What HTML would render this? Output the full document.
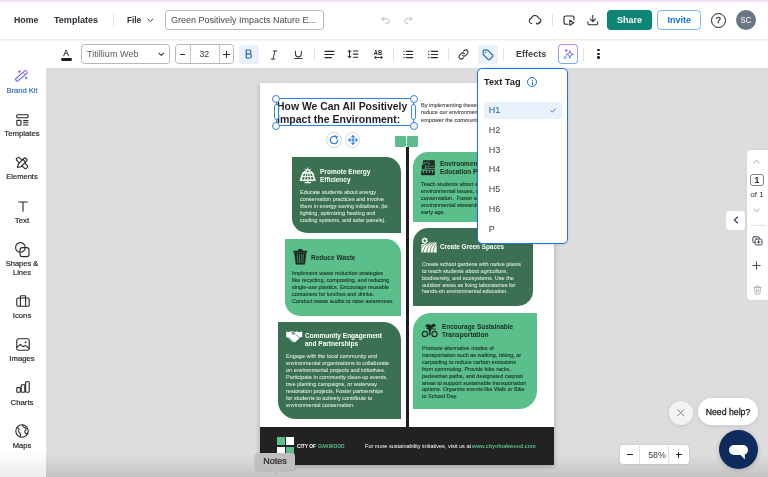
<!DOCTYPE html>
<html><head><meta charset="utf-8"><title>Editor</title>
<style>
html,body{margin:0;padding:0;}
body{width:768px;height:477px;overflow:hidden;position:relative;background:#dddddd;font-family:"Liberation Sans", sans-serif;}
.t{position:absolute;white-space:pre;font-family:"Liberation Sans", sans-serif;display:block;}
.a{position:absolute;}
#root{position:absolute;left:0;top:0;width:768px;height:477px;overflow:hidden;will-change:transform;}

.card{position:absolute;z-index:1;}
.sep{position:absolute;width:1px;background:#dcdfe3;z-index:3;}
svg{position:absolute;overflow:visible;}

</style></head><body>
<div id="root">
<div class="a" style="left:260.3px;top:83px;width:294.2px;height:381.6px;background:#fff;z-index:0;box-shadow:0 1.5px 5px rgba(0,0,0,.25);"></div>
<div class="a" style="left:260.3px;top:426.7px;width:294.2px;height:37.9px;background:#222222;z-index:1;"></div>
<div class="a" style="left:405.5px;top:147px;width:3.2px;height:279.7px;background:#1d1d1d;z-index:1;"></div>
<div class="a" style="left:395.2px;top:136.3px;width:10.4px;height:10.6px;background:#5bbf8b;z-index:1;border-radius:1px;"></div>
<div class="a" style="left:407.2px;top:136.3px;width:10.9px;height:10.6px;background:#5bbf8b;z-index:1;border-radius:1px;"></div>
<div class="a" style="left:292px;top:156.5px;width:109.2px;height:76.1px;background:#3b7152;z-index:1;border-radius:0 15px 0 15px;"></div>
<div class="a" style="left:285.3px;top:238.8px;width:115.9px;height:77.2px;background:#5bbf8b;z-index:1;border-radius:0 15px 0 15px;"></div>
<div class="a" style="left:277.8px;top:322.4px;width:123.4px;height:97px;background:#3b7152;z-index:1;border-radius:0 18px 0 18px;"></div>
<div class="a" style="left:413.1px;top:151.7px;width:124px;height:70px;background:#5bbf8b;z-index:1;border-radius:15px 0 15px 0;"></div>
<div class="a" style="left:413.1px;top:228px;width:120px;height:77.7px;background:#3b7152;z-index:1;border-radius:15px 0 15px 0;"></div>
<div class="a" style="left:413.1px;top:313px;width:124.1px;height:96.3px;background:#5bbf8b;z-index:1;border-radius:18px 0 18px 0;"></div>
<div class="a" style="left:277px;top:437px;width:7.5px;height:7.5px;background:#5bbf8b;z-index:2;"></div>
<div class="a" style="left:286px;top:437px;width:7.5px;height:7.5px;background:#fff;z-index:2;"></div>
<div class="a" style="left:277px;top:446.5px;width:7.5px;height:7.5px;background:#fff;z-index:2;"></div>
<div class="a" style="left:286px;top:446.5px;width:7.5px;height:7.5px;background:#5bbf8b;z-index:2;"></div>
<div class="a" style="left:0px;top:0px;width:768px;height:39px;background:#fff;z-index:5;box-shadow:0 1px 2px rgba(0,0,0,.11);"></div>
<div class="a" style="left:0px;top:0px;width:768px;height:1.5px;background:#f1e2f6;z-index:6;"></div>
<div class="a" style="left:46px;top:39px;width:722px;height:29px;background:#fff;z-index:4;"></div>
<div class="a" style="left:0px;top:39px;width:46px;height:438px;background:#fff;z-index:4;"></div>
<svg style="left:146.9px;top:17.9px;z-index:7;" width="6.6" height="5" viewBox="0 0 8 6" fill="none"><path d="M1 1.2 L4 4.2 L7 1.2" stroke="#2f3237" stroke-width="1.2" stroke-linecap="round" stroke-linejoin="round"/></svg>
<div class="a" style="left:113.2px;top:13.5px;width:1px;height:12.5px;background:#e6e8eb;z-index:7;"></div>
<div class="a" style="left:165.0px;top:10.2px;width:158.6px;height:19.6px;background:#fff;z-index:7;border:1px solid #b4b8bf;border-radius:3.5px;box-sizing:border-box;"></div>
<svg style="left:380.7px;top:16.2px;z-index:7;" width="9.7" height="7.95" viewBox="0 0 11 9" fill="none"><path d="M3.2 1 L1 3.2 L3.2 5.4 M1 3.2 H6.8 A2.6 2.6 0 0 1 6.8 8.4 H5.6" stroke="#b4b8bf" stroke-width="1.1" stroke-linecap="round" stroke-linejoin="round"/></svg>
<svg style="left:403.5px;top:16.2px;z-index:7;" width="9.7" height="7.95" viewBox="0 0 11 9" fill="none"><path d="M6.8 1 L9 3.2 L6.8 5.4 M9 3.2 H3.2 A2.6 2.6 0 0 0 3.2 8.4 H4.4" stroke="#b4b8bf" stroke-width="1" stroke-linecap="round" stroke-linejoin="round"/></svg>
<svg style="left:527.7px;top:14.2px;z-index:7;" width="14.6" height="12.4" viewBox="0 0 16 13" fill="none"><path d="M4.2 10.2 H3.9 A2.9 2.9 0 0 1 3.6 4.5 A4 4 0 0 1 11.3 4 A3.1 3.1 0 0 1 12.6 9.8" stroke="#2a2d33" stroke-width="1.15" stroke-linecap="round"/><path d="M9 9.6 L10.4 11 L12.8 8.4" stroke="#2a2d33" stroke-width="1.1" stroke-linecap="round" stroke-linejoin="round"/></svg>
<div class="a" style="left:552.3px;top:14px;width:1px;height:12px;background:#dfe1e5;z-index:7;"></div>
<svg style="left:562.5px;top:15px;z-index:7;" width="12" height="11" viewBox="0 0 12 11" fill="none"><path d="M5 9.2 H2.6 A1.6 1.6 0 0 1 1 7.6 V2.6 A1.6 1.6 0 0 1 2.6 1 H9.4 A1.6 1.6 0 0 1 11 2.6 V4.6" stroke="#2a2d33" stroke-width="1.15" stroke-linecap="round"/><path d="M6.8 5.2 L10.8 7.7 L6.8 10.2 Z" stroke="#2a2d33" stroke-width="1.05" stroke-linejoin="round"/></svg>
<svg style="left:586.6px;top:14.2px;z-index:7;" width="11.6" height="12.2" viewBox="0 0 13 13" fill="none"><path d="M6.5 1 V8 M3.4 5.2 L6.5 8.2 L9.6 5.2" stroke="#2a2d33" stroke-width="1.15" stroke-linecap="round" stroke-linejoin="round"/><path d="M1 8.4 V10.4 A1.4 1.4 0 0 0 2.4 11.8 H10.6 A1.4 1.4 0 0 0 12 10.4 V8.4" stroke="#2a2d33" stroke-width="1.15" stroke-linecap="round"/></svg>
<div class="a" style="left:607.2px;top:10.3px;width:44.8px;height:19.8px;background:#0e8575;z-index:7;border-radius:3.8px;"></div>
<div class="a" style="left:656.9px;top:10px;width:44.6px;height:20.4px;background:#fff;z-index:7;border:1.4px solid #80b3f4;border-radius:4.2px;box-sizing:border-box;"></div>
<div class="a" style="left:711px;top:12.7px;width:15px;height:15px;background:#fff;z-index:7;border:1.3px solid #1d1f23;border-radius:50%;box-sizing:border-box;"></div>
<div class="a" style="left:736px;top:10.2px;width:19.8px;height:19.8px;background:#6b7685;z-index:7;border-radius:50%;"></div>
<div class="a" style="left:60.5px;top:58px;width:11.4px;height:2.8px;background:#1d1f23;z-index:7;border-radius:1.4px;"></div>
<div class="a" style="left:81.2px;top:44.4px;width:88.4px;height:19.5px;background:#fff;z-index:7;border:1px solid #b3b7be;border-radius:3.5px;box-sizing:border-box;"></div>
<svg style="left:158px;top:52.2px;z-index:7;" width="6.6" height="5" viewBox="0 0 8 6" fill="none"><path d="M1 1.2 L4 4.2 L7 1.2" stroke="#34373d" stroke-width="1.25" stroke-linecap="round" stroke-linejoin="round"/></svg>
<div class="a" style="left:175.2px;top:44.4px;width:58.8px;height:19.5px;background:#fff;z-index:7;border:1px solid #b3b7be;border-radius:3.5px;box-sizing:border-box;"></div>
<div class="a" style="left:190px;top:45px;width:1px;height:18.4px;background:#c8ccd2;z-index:8;"></div>
<div class="a" style="left:218.8px;top:45px;width:1px;height:18.4px;background:#c8ccd2;z-index:8;"></div>
<div class="a" style="left:179.8px;top:54px;width:5.6px;height:1.1px;background:#2a2d33;z-index:8;"></div>
<div class="a" style="left:223px;top:54px;width:6.6px;height:1.1px;background:#2a2d33;z-index:8;"></div>
<div class="a" style="left:225.75px;top:51.2px;width:1.1px;height:6.7px;background:#2a2d33;z-index:8;"></div>
<div class="a" style="left:239.3px;top:44.6px;width:19.4px;height:19.2px;background:#e8f1fc;z-index:7;border-radius:3.5px;"></div>
<svg style="left:245px;top:49.3px;z-index:7;" width="8" height="10" viewBox="0 0 8 10" fill="none"><path d="M1.3 1 H4.3 A2 2 0 0 1 4.3 4.9 H1.3 Z M1.3 4.9 H4.8 A2.1 2.1 0 0 1 4.8 9 H1.3 Z" stroke="#2467b8" stroke-width="1.2" stroke-linejoin="round"/></svg>
<svg style="left:269.5px;top:49.5px;z-index:7;" width="8" height="10" viewBox="0 0 8 10" fill="none"><path d="M3.2 1 H6.8 M1.2 9 H4.8 M5 1 L3 9" stroke="#3a3d42" stroke-width="1" stroke-linecap="round"/></svg>
<svg style="left:293.8px;top:49.8px;z-index:7;" width="9" height="10" viewBox="0 0 9 10" fill="none"><path d="M1.5 1 V4 A2.9 2.9 0 0 0 7.3 4 V1" stroke="#3a3d42" stroke-width="1.05" stroke-linecap="round"/><path d="M0.8 8.5 H8.2" stroke="#3a3d42" stroke-width="1" stroke-linecap="round"/></svg>
<div class="a" style="left:313.5px;top:48px;width:1px;height:13px;background:#e1e3e7;z-index:7;"></div>
<svg style="left:323.5px;top:50px;z-index:7;" width="11" height="9" viewBox="0 0 11 9" fill="none"><path d="M0.9 1.3 H9.9 M0.9 4.45 H9.9 M0.9 7.6 H7.4" stroke="#25282d" stroke-width="1.15" stroke-linecap="round"/></svg>
<svg style="left:347.3px;top:49.3px;z-index:7;" width="12" height="10" viewBox="0 0 12 10" fill="none"><path d="M2.5 1.2 V8.8 M0.9 2.8 L2.5 1.1 L4.1 2.8 M0.9 7.2 L2.5 8.9 L4.1 7.2" stroke="#25282d" stroke-width="1" stroke-linecap="round" stroke-linejoin="round"/><path d="M6.4 2 H10.8 M6.4 5.1 H10.8 M6.4 8.2 H10.8" stroke="#25282d" stroke-width="1.15" stroke-linecap="round"/></svg>
<svg style="left:373.6px;top:54.8px;z-index:7;" width="9" height="5" viewBox="0 0 9 5" fill="none"><path d="M0.8 2.5 H8.2 M2.1 1.1 L0.7 2.5 L2.1 3.9 M6.9 1.1 L8.3 2.5 L6.9 3.9" stroke="#25282d" stroke-width="0.9" stroke-linecap="round" stroke-linejoin="round"/></svg>
<div class="a" style="left:393px;top:48px;width:1px;height:13px;background:#e1e3e7;z-index:7;"></div>
<svg style="left:403.2px;top:50px;z-index:7;" width="10" height="9" viewBox="0 0 10 9" fill="none"><path d="M3.2 1.3 H9.6 M3.2 4.45 H9.6 M3.2 7.6 H9.6" stroke="#25282d" stroke-width="1.15" stroke-linecap="round"/><path d="M0.9 1.3 H1 M0.9 4.45 H1 M0.9 7.6 H1" stroke="#25282d" stroke-width="1.25" stroke-linecap="round"/></svg>
<svg style="left:428.2px;top:50px;z-index:7;" width="10" height="9" viewBox="0 0 10 9" fill="none"><path d="M3.2 1.3 H9.6 M3.2 4.45 H9.6 M3.2 7.6 H9.6" stroke="#25282d" stroke-width="1.15" stroke-linecap="round"/><path d="M0.8 0.6 V2 M0.5 4.1 H1.1 V4.8 H0.5 M0.5 7.2 H1.1 V8 H0.5" stroke="#25282d" stroke-width="0.7" stroke-linecap="round"/></svg>
<div class="a" style="left:448.1px;top:48px;width:1px;height:13px;background:#e1e3e7;z-index:7;"></div>
<svg style="left:457.5px;top:49px;z-index:7;" width="11" height="11" viewBox="0 0 11 11" fill="none"><path d="M4.6 6.4 A2.2 2.2 0 0 0 7.7 6.4 L9.5 4.6 A2.2 2.2 0 0 0 6.4 1.5 L5.6 2.3" stroke="#2a2d33" stroke-width="1.05" stroke-linecap="round"/><path d="M6.4 4.6 A2.2 2.2 0 0 0 3.3 4.6 L1.5 6.4 A2.2 2.2 0 0 0 4.6 9.5 L5.4 8.7" stroke="#2a2d33" stroke-width="1.05" stroke-linecap="round"/></svg>
<div class="a" style="left:478.2px;top:44.6px;width:19.4px;height:19.2px;background:#e8f1fc;z-index:7;border-radius:3.5px;"></div>
<svg style="left:482.3px;top:48.6px;z-index:7;" width="12" height="12" viewBox="0 0 12 12" fill="none"><path d="M1.2 1.9 A0.8 0.8 0 0 1 2 1.1 H5.6 L10.7 6.2 A0.9 0.9 0 0 1 10.7 7.5 L7.6 10.6 A0.9 0.9 0 0 1 6.3 10.6 L1.2 5.5 Z" stroke="#2467b8" stroke-width="1.15" stroke-linejoin="round"/><circle cx="3.7" cy="3.6" r="0.75" fill="#2467b8"/></svg>
<div class="a" style="left:503px;top:48px;width:1px;height:13px;background:#e1e3e7;z-index:7;"></div>
<div class="a" style="left:558.2px;top:44.2px;width:19.8px;height:19.8px;background:linear-gradient(180deg,#b48cf5,#7aa8fb);z-index:7;border-radius:4px;"></div>
<div class="a" style="left:559.4px;top:45.4px;width:17.4px;height:17.4px;background:#fff;z-index:7;border-radius:3px;"></div>
<svg style="left:562px;top:48px;z-index:7;" width="12" height="12" viewBox="0 0 12 12" fill="none"><path d="M7.8 2.6 L8.75 5.45 L11.6 6.4 L8.75 7.35 L7.8 10.2 L6.85 7.35 L4 6.4 L6.85 5.45 Z" stroke="#5d63e6" stroke-width="0.85" stroke-linejoin="round"/><path d="M4.2 0.9 L4.65 2.15 L5.9 2.6 L4.65 3.05 L4.2 4.3 L3.75 3.05 L2.5 2.6 L3.75 2.15 Z" fill="#8a5cf0" stroke="#8a5cf0" stroke-width="0.3" stroke-linejoin="round"/><path d="M3.2 7.8 L3.65 9.05 L4.9 9.5 L3.65 9.95 L3.2 11.2 L2.75 9.95 L1.5 9.5 L2.75 9.05 Z" stroke="#5d7df0" stroke-width="0.6" stroke-linejoin="round"/></svg>
<div class="a" style="left:583px;top:48px;width:1px;height:13px;background:#e1e3e7;z-index:7;"></div>
<div class="a" style="left:597.2px;top:49.0px;width:2.4px;height:2.4px;background:#1d1f23;z-index:7;border-radius:50%;"></div>
<div class="a" style="left:597.2px;top:52.65px;width:2.4px;height:2.4px;background:#1d1f23;z-index:7;border-radius:50%;"></div>
<div class="a" style="left:597.2px;top:56.3px;width:2.4px;height:2.4px;background:#1d1f23;z-index:7;border-radius:50%;"></div>
<svg style="left:14px;top:68px;z-index:7;" width="16" height="16" viewBox="0 0 16 16" fill="none"><defs><linearGradient id="wg" x1="0" y1="1" x2="1" y2="0"><stop offset="0" stop-color="#3f6df0"/><stop offset="1" stop-color="#9a4df5"/></linearGradient></defs><g transform="translate(7.4,7.9) rotate(-41)"><rect x="-6.9" y="-1.6" width="13.8" height="3.2" rx="1.1" stroke="url(#wg)" stroke-width="1.05"/><path d="M3.6 -1.6 V1.6" stroke="#9a4df5" stroke-width="0.9"/></g><path d="M5.5 2.6 V4.6 M4.5 3.6 H6.5" stroke="#9a4df5" stroke-width="0.9" stroke-linecap="round"/><path d="M12.2 8.8 V10.8 M11.2 9.8 H13.2" stroke="#3f6df0" stroke-width="0.9" stroke-linecap="round"/></svg>
<svg style="left:16.2px;top:114.2px;z-index:7;" width="13" height="12" viewBox="0 0 13 12" fill="none"><rect x="0.8" y="0.8" width="11.2" height="3" rx="0.8" stroke="#25282d" stroke-width="1.1" stroke-linecap="round" stroke-linejoin="round"/><rect x="0.8" y="6.4" width="4.2" height="4.8" rx="0.8" stroke="#25282d" stroke-width="1.1" stroke-linecap="round" stroke-linejoin="round"/><path d="M7.6 6.6 H12 M7.6 8.8 H12 M7.6 11 H12" stroke="#25282d" stroke-width="1.1" stroke-linecap="round" stroke-linejoin="round"/></svg>
<svg style="left:15px;top:155.5px;z-index:7;" width="14" height="14" viewBox="0 0 14 14" fill="none"><g transform="rotate(-45 7 7)"><rect x="5.1" y="0.2" width="3.8" height="13.6" rx="1.2" fill="#fff" stroke="#25282d" stroke-width="1.1" stroke-linecap="round" stroke-linejoin="round"/></g><g transform="rotate(45 7 7)"><path d="M5.1 2.2 A1.2 1.2 0 0 1 6.3 1 H7.7 A1.2 1.2 0 0 1 8.9 2.2 V10.4 L7 13.4 L5.1 10.4 Z" fill="#fff" stroke="#25282d" stroke-width="1.1" stroke-linecap="round" stroke-linejoin="round"/><path d="M5.1 3.8 H8.9" stroke="#25282d" stroke-width="1.1" stroke-linecap="round" stroke-linejoin="round"/></g></svg>
<svg style="left:17.5px;top:200.5px;z-index:7;" width="10" height="11" viewBox="0 0 10 11" fill="none"><path d="M0.8 1 H9.2 M5 1 V10.2" stroke="#25282d" stroke-width="1.1" stroke-linecap="round" stroke-linejoin="round"/></svg>
<svg style="left:14.6px;top:242px;z-index:7;" width="15" height="15" viewBox="0 0 15 15" fill="none"><circle cx="5.4" cy="5.4" r="4.8" stroke="#25282d" stroke-width="1.1" stroke-linecap="round" stroke-linejoin="round"/><rect x="5" y="5.6" width="9" height="9" rx="2.2" stroke="#25282d" stroke-width="1.1" stroke-linecap="round" stroke-linejoin="round"/></svg>
<svg style="left:15.5px;top:294.5px;z-index:7;" width="14" height="12" viewBox="0 0 14 12" fill="none"><rect x="0.8" y="3" width="12.4" height="8.2" rx="1.2" stroke="#25282d" stroke-width="1.1" stroke-linecap="round" stroke-linejoin="round"/><path d="M4.4 3 V1.6 A0.8 0.8 0 0 1 5.2 0.8 H8.8 A0.8 0.8 0 0 1 9.6 1.6 V3 M4.4 3 V11 M9.6 3 V11" stroke="#25282d" stroke-width="1.1" stroke-linecap="round" stroke-linejoin="round"/></svg>
<svg style="left:15.5px;top:337.5px;z-index:7;" width="14" height="13" viewBox="0 0 14 13" fill="none"><rect x="0.8" y="0.8" width="12.4" height="11.4" rx="1.8" stroke="#25282d" stroke-width="1.1" stroke-linecap="round" stroke-linejoin="round"/><path d="M0.9 9.4 L4.4 6.4 L7.2 8.8 L9.2 7.4 L13 10.2" stroke="#25282d" stroke-width="1.1" stroke-linecap="round" stroke-linejoin="round"/><circle cx="9.6" cy="4.2" r="0.9" fill="#25282d"/></svg>
<svg style="left:15.5px;top:381px;z-index:7;" width="14" height="12" viewBox="0 0 14 12" fill="none"><rect x="0.8" y="6.6" width="3.6" height="4.6" rx="0.6" stroke="#25282d" stroke-width="1.1" stroke-linecap="round" stroke-linejoin="round"/><rect x="5.2" y="3.8" width="3.6" height="7.4" rx="0.6" stroke="#25282d" stroke-width="1.1" stroke-linecap="round" stroke-linejoin="round"/><rect x="9.6" y="0.8" width="3.6" height="10.4" rx="0.6" stroke="#25282d" stroke-width="1.1" stroke-linecap="round" stroke-linejoin="round"/></svg>
<svg style="left:15.3px;top:424px;z-index:7;" width="14" height="14" viewBox="0 0 14 14" fill="none"><circle cx="7" cy="7" r="6.2" stroke="#25282d" stroke-width="1.1" stroke-linecap="round" stroke-linejoin="round"/><path d="M2.2 3.4 C4 4.2 4.6 5.6 3.6 7 C3 8 4.8 8.6 5.4 10 C5.8 11 5.4 12.2 5.2 12.8 M8 1 C7.4 2.6 8.6 3.4 9.8 3.6 C11.2 3.8 11.6 5.2 10.6 6.2 C9.6 7.2 9.4 8.4 10.6 9.2 C11.4 9.8 12.2 9.6 12.8 9.2" stroke="#25282d" stroke-width="1.1" stroke-linecap="round" stroke-linejoin="round"/></svg>
<div class="a" style="left:477px;top:68px;width:91px;height:176.3px;background:#fff;z-index:9;border:1.7px solid #1a73e8;border-radius:5px;box-sizing:border-box;box-shadow:0 1px 3px rgba(0,0,0,.10);"></div>
<div class="a" style="left:527.3px;top:77.3px;width:10.2px;height:10.2px;background:#fff;z-index:10;border:1px solid #1a73e8;border-radius:50%;box-sizing:border-box;"></div>
<div class="a" style="left:531.9px;top:81.7px;width:1px;height:3.2px;background:#1a73e8;z-index:11;"></div>
<div class="a" style="left:531.9px;top:79.7px;width:1px;height:1.1px;background:#1a73e8;z-index:11;"></div>
<div class="a" style="left:484px;top:102.2px;width:77.7px;height:16.6px;background:#e9f1fd;z-index:10;border-radius:3px;"></div>
<svg style="left:550.2px;top:108.2px;z-index:11;" width="6.1" height="5.2" viewBox="0 0 7 6" fill="none"><path d="M0.8 3 L2.6 4.8 L6.2 0.9" stroke="#2a6bc0" stroke-width="1" stroke-linecap="round" stroke-linejoin="round"/></svg>
<div class="a" style="left:276.2px;top:98px;width:137.6px;height:27.5px;background:transparent;z-index:3;border:1px solid #2f80ed;box-sizing:border-box;"></div>
<div class="a" style="left:272.34999999999997px;top:94.5px;width:8.1px;height:8.1px;background:#fff;z-index:3;border:1.1px solid #2f80ed;border-radius:50%;box-sizing:border-box;"></div>
<div class="a" style="left:409.75px;top:94.5px;width:8.1px;height:8.1px;background:#fff;z-index:3;border:1.1px solid #2f80ed;border-radius:50%;box-sizing:border-box;"></div>
<div class="a" style="left:272.34999999999997px;top:121.5px;width:8.1px;height:8.1px;background:#fff;z-index:3;border:1.1px solid #2f80ed;border-radius:50%;box-sizing:border-box;"></div>
<div class="a" style="left:409.75px;top:121.5px;width:8.1px;height:8.1px;background:#fff;z-index:3;border:1.1px solid #2f80ed;border-radius:50%;box-sizing:border-box;"></div>
<div class="a" style="left:273.9px;top:103.6px;width:5.2px;height:16px;background:#fff;z-index:3;border:1px solid #2f80ed;border-radius:2.6px;box-sizing:border-box;"></div>
<div class="a" style="left:411.2px;top:103.6px;width:5.2px;height:16px;background:#fff;z-index:3;border:1px solid #2f80ed;border-radius:2.6px;box-sizing:border-box;"></div>
<div class="a" style="left:326.0px;top:132.0px;width:15.6px;height:15.6px;background:#fff;z-index:3;border:0.9px solid #d3d7dd;border-radius:50%;box-sizing:border-box;"></div>
<div class="a" style="left:344.7px;top:132.0px;width:15.6px;height:15.6px;background:#fff;z-index:3;border:0.9px solid #d3d7dd;border-radius:50%;box-sizing:border-box;"></div>
<svg style="left:328.8px;top:134.8px;z-index:4;" width="10" height="10" viewBox="0 0 10 10" fill="none"><path d="M8.7 5 A3.7 3.7 0 1 1 7.3 2.1" stroke="#2f80ed" stroke-width="1.25" stroke-linecap="round"/><path d="M5.9 0.9 L8.3 1.5 L7.5 3.9" stroke="#2f80ed" stroke-width="1.1" stroke-linecap="round" stroke-linejoin="round"/></svg>
<svg style="left:347.5px;top:134.8px;z-index:4;" width="10" height="10" viewBox="0 0 10 10" fill="none"><path d="M5 0.8 V9.2 M0.8 5 H9.2" stroke="#2f80ed" stroke-width="1.15" stroke-linecap="round"/><path d="M3.7 2.1 L5 0.7 L6.3 2.1 M3.7 7.9 L5 9.3 L6.3 7.9 M2.1 3.7 L0.7 5 L2.1 6.3 M7.9 3.7 L9.3 5 L7.9 6.3" stroke="#2f80ed" stroke-width="1.05" stroke-linecap="round" stroke-linejoin="round"/></svg>
<div class="a" style="left:746.5px;top:149.8px;width:22px;height:150.6px;background:#fff;z-index:5;border-radius:4px 0 0 4px;box-shadow:0 0 2px rgba(0,0,0,.12);"></div>
<svg style="left:753.3px;top:159.2px;z-index:7;" width="7" height="5" viewBox="0 0 7 5" fill="none"><path d="M0.8 4 L3.5 1.2 L6.2 4" stroke="#9aa0a8" stroke-width="1" stroke-linecap="round" stroke-linejoin="round"/></svg>
<div class="a" style="left:750px;top:173.5px;width:13.7px;height:12.9px;background:#fff;z-index:7;border:1px solid #7a7f87;border-radius:3px;box-sizing:border-box;"></div>
<svg style="left:753.3px;top:208.2px;z-index:7;" width="7" height="5" viewBox="0 0 7 5" fill="none"><path d="M0.8 1 L3.5 3.8 L6.2 1" stroke="#9aa0a8" stroke-width="1" stroke-linecap="round" stroke-linejoin="round"/></svg>
<div class="a" style="left:749.5px;top:224.8px;width:16px;height:1px;background:#e1e3e7;z-index:7;"></div>
<svg style="left:751.7px;top:236px;z-index:7;" width="11" height="10" viewBox="0 0 11 10" fill="none"><rect x="0.8" y="0.8" width="6.6" height="5.8" rx="1.3" stroke="#2c3446" stroke-width="0.9" stroke-linecap="round" stroke-linejoin="round"/><rect x="3.2" y="3" width="6.8" height="6" rx="1.3" fill="#fff" stroke="#2c3446" stroke-width="0.9" stroke-linecap="round" stroke-linejoin="round"/><path d="M6.6 4.6 V7.4 M5.2 6 H8" stroke="#2c3446" stroke-width="0.9" stroke-linecap="round" stroke-linejoin="round" stroke-width="0.8"/></svg>
<svg style="left:752.2px;top:260.6px;z-index:7;" width="9" height="9" viewBox="0 0 9 9" fill="none"><path d="M4.5 0.8 V8.2 M0.8 4.5 H8.2" stroke="#2c3446" stroke-width="0.9" stroke-linecap="round" stroke-linejoin="round"/></svg>
<svg style="left:753px;top:285px;z-index:7;" width="9" height="10" viewBox="0 0 9 10" fill="none"><path d="M0.8 2.4 H8.2 M3.2 2.2 V1 H5.8 V2.2 M1.6 2.6 L2 8.6 A0.7 0.7 0 0 0 2.7 9.2 H6.3 A0.7 0.7 0 0 0 7 8.6 L7.4 2.6 M3.6 4.2 V7.4 M5.4 4.2 V7.4" stroke="#aab0b8" stroke-width="0.9" stroke-linecap="round" stroke-linejoin="round"/></svg>
<div class="a" style="left:726px;top:211px;width:19px;height:18.6px;background:#fff;z-index:5;border-radius:4px;"></div>
<svg style="left:732.6px;top:216.3px;z-index:7;" width="6" height="8" viewBox="0 0 6 8" fill="none"><path d="M4.6 1 L1.4 4 L4.6 7" stroke="#2a3f6a" stroke-width="1.1" stroke-linecap="round" stroke-linejoin="round"/></svg>
<div class="a" style="left:619.8px;top:445.2px;width:68.8px;height:18.9px;background:#fff;z-index:5;border-radius:3px;box-shadow:0 0 2px rgba(0,0,0,.2);"></div>
<div class="a" style="left:638.8px;top:445.6px;width:1px;height:18.1px;background:#dfe1e5;z-index:6;"></div>
<div class="a" style="left:668.2px;top:445.6px;width:1px;height:18.1px;background:#dfe1e5;z-index:6;"></div>
<div class="a" style="left:627.2px;top:454.2px;width:5.4px;height:1.1px;background:#25282d;z-index:6;"></div>
<div class="a" style="left:675.6px;top:454.2px;width:6.4px;height:1.1px;background:#25282d;z-index:6;"></div>
<div class="a" style="left:678.25px;top:451.5px;width:1.1px;height:6.5px;background:#25282d;z-index:6;"></div>
<div class="a" style="left:668.8px;top:400.6px;width:24.2px;height:24.2px;background:#f3f3f3;z-index:5;border-radius:50%;box-shadow:0 1px 4px rgba(0,0,0,.10);"></div>
<svg style="left:677.2px;top:409px;z-index:7;" width="7.4" height="7.4" viewBox="0 0 7.4 7.4" fill="none"><path d="M0.7 0.7 L6.7 6.7 M6.7 0.7 L0.7 6.7" stroke="#6b6f76" stroke-width="0.8" stroke-linecap="round"/></svg>
<div class="a" style="left:698.1px;top:397.9px;width:60.1px;height:27.2px;background:#fff;z-index:5;border-radius:13.7px;box-shadow:0 1px 5px rgba(0,0,0,.10);"></div>
<div class="a" style="left:718.7px;top:429.8px;width:39.6px;height:39.6px;background:#0f2a5c;z-index:5;border-radius:50%;box-shadow:0 1px 5px rgba(0,0,0,.2);"></div>
<div class="a" style="left:728.5px;top:444.5px;width:19.4px;height:10.3px;background:#fff;z-index:6;border-radius:5.15px;"></div>
<svg style="left:740px;top:454px;z-index:6;" width="6" height="6" viewBox="0 0 6 6" fill="none"><path d="M0.2 0.4 H4.8 V5.6 Z" fill="#fff"/></svg>
<div class="a" style="left:46px;top:455px;width:722px;height:22px;background:linear-gradient(180deg,rgba(0,0,0,0),rgba(0,0,0,.115));z-index:4;"></div>
<div class="a" style="left:0px;top:450px;width:46px;height:27px;background:linear-gradient(180deg,rgba(0,0,0,0),rgba(0,0,0,.075));z-index:5;"></div>
<div class="a" style="left:254.6px;top:453.3px;width:40.2px;height:16.4px;background:#bfbfbf;z-index:5;border-radius:3px;box-shadow:0 1px 3px rgba(0,0,0,.15);"></div>
<svg style="left:270.6px;top:469.5px;z-index:5;" width="9.6" height="6" viewBox="0 0 9.6 6" fill="none"><path d="M0 0 H9.6 L4.8 5.8 Z" fill="#bfbfbf"/></svg>
<svg style="left:299px;top:166.5px;z-index:2;" width="18" height="17" viewBox="0 0 18 17" fill="none"><circle cx="8.8" cy="4.4" r="2.5" fill="#ffffff"/><circle cx="8.8" cy="4.6" r="1.1" fill="#3b7152"/><path d="M8.8 0.9 V1.6 M5.9 2 L6.5 2.6 M11.7 2 L11.1 2.6 M5.2 4.4 H5.8 M11.8 4.4 H12.4" stroke="#ffffff" stroke-width="1" stroke-linecap="round"/><path d="M3.8 5.6 H13.8 L16.3 13.6 H1 Z" fill="#ffffff" stroke="#ffffff" stroke-width="0.9" stroke-linejoin="round"/><path d="M4.7 6.8 H12.9 L13.6 9.1 H4 Z M3.7 10.1 H13.9 L14.7 12.5 H2.9 Z" fill="#3b7152"/><path d="M6.7 6.4 L5.6 13 M8.8 6.4 V13 M10.9 6.4 L12 13" stroke="#ffffff" stroke-width="0.95"/><path d="M8.7 13.8 V15.2 M6 15.6 H11.6" stroke="#ffffff" stroke-width="1.1" stroke-linecap="round"/></svg>
<svg style="left:292.5px;top:248.5px;z-index:2;" width="15" height="16" viewBox="0 0 15 16" fill="none"><path d="M5.4 1.9 V1.1 Q5.4 0.6 5.9 0.6 H8.7 Q9.2 0.6 9.2 1.1 V1.9" stroke="#1f2a24" stroke-width="1" fill="#1f2a24"/><path d="M0.7 2 H13.9 V3.4 H0.7 Z" fill="#1f2a24" stroke="#1f2a24" stroke-width="0.6" stroke-linejoin="round"/><path d="M1.5 4 H13.1 L11.7 15.2 H3 Z" fill="#1f2a24" stroke="#1f2a24" stroke-width="0.6" stroke-linejoin="round"/><path d="M4.2 5.4 L4.9 13.8 M6.3 5.4 L6.6 13.8 M8.4 5.4 L8.2 13.8 M10.5 5.4 L9.9 13.8" stroke="#5bbf8b" stroke-width="0.6" stroke-linecap="round" opacity="0.85"/></svg>
<svg style="left:286px;top:330.8px;z-index:2;" width="16.4" height="11.8" viewBox="0 0 16.4 11.8" fill="none"><path d="M0.2 0.6 L2.2 1 L4.6 0.4 L6.8 0.2 L8.2 1.2 L10.2 0.2 L13 1.2 L16.2 0.5 V6 L13.6 6.2 L12.6 8.2 L8.6 11.4 L7.6 10.4 L6.6 11.2 L1.8 6.4 L0.2 6.2 Z" fill="#ffffff"/><path d="M5.4 1.6 L7 0.9 L8.6 2 L6.6 3.6 Z" fill="#3b7152" opacity="0.85"/><path d="M7 3.6 L8.8 2.4 L12.8 6.4 M3 6.6 L7.2 10.6" stroke="#3b7152" stroke-width="0.7" stroke-linecap="round" fill="none"/></svg>
<svg style="left:421px;top:159.5px;z-index:2;" width="14" height="15.4" viewBox="0 0 14 15.4" fill="none"><rect x="2" y="0.2" width="11.8" height="8.6" fill="#1f2a24"/><circle cx="2.6" cy="3.2" r="1.1" fill="#1f2a24" stroke="#5bbf8b" stroke-width="0.5"/><path d="M4.6 2.8 H6.4 M7.4 2.2 L8.6 3.2 L7.2 5.4 M6 6.8 H8.4 M10 6.2 H12.4" stroke="#5bbf8b" stroke-width="0.7" stroke-linecap="round" fill="none"/><rect x="0.8" y="4.8" width="3.4" height="4.6" fill="#1f2a24"/><path d="M4.6 5 V9 M5.2 8.9 H14" stroke="#5bbf8b" stroke-width="0.8"/><rect x="4.6" y="9.2" width="9.6" height="0.9" fill="#1f2a24"/><rect x="0.2" y="10.6" width="13.6" height="4.6" fill="#1f2a24"/><path d="M2.5 10.4 V13 M5.5 10.4 V13 M8.5 10.4 V13 M11.5 10.4 V13" stroke="#5bbf8b" stroke-width="0.9"/></svg>
<svg style="left:420.9px;top:237.2px;z-index:2;" width="16" height="16" viewBox="0 0 16 16" fill="none"><circle cx="3.7" cy="3.6" r="2.2" fill="none" stroke="#ffffff" stroke-width="1.7" stroke-dasharray="1.5 0.55"/><circle cx="3.7" cy="3.6" r="2" fill="none" stroke="#ffffff" stroke-width="1"/><path d="M0.4 7.6 L9 5.4 H15.6 V15.6 H0.4 Z" fill="#ffffff"/><path d="M2.2 15.6 C2.6 11 5.6 7.4 10.4 5.6 M5.6 15.6 C6 11.4 8.2 8 12.2 5.8 M9 15.6 C9.2 11.6 10.8 8.4 13.8 6 M12.2 15.6 C12.4 12 13.4 9 15.4 6.6 M0.4 10.6 C2 8.6 4.4 7 7.4 6" stroke="#3b7152" stroke-width="0.8" fill="none"/></svg>
<svg style="left:420.5px;top:322.5px;z-index:2;" width="17" height="15" viewBox="0 0 17 15" fill="none"><circle cx="3.9" cy="11" r="2.6" stroke="#1f2a24" stroke-width="1.15" fill="none"/><circle cx="13.5" cy="11" r="2.6" stroke="#1f2a24" stroke-width="1.15" fill="none"/><circle cx="8.7" cy="11.2" r="1" stroke="#1f2a24" stroke-width="0.8" fill="none"/><path d="M10.3 2.9 C10.4 0.3 14.8 -0.1 14.7 3.1 L12.7 4.3 L10.9 3.7 Z" fill="#1f2a24"/><path d="M4.6 2.6 L7 1.2 L9.8 2.2 L11.6 4.6 L10 6.8 L9.5 8.4 L8.1 8.4 L7.7 6.6 L5.8 5.7 L6.5 3.7 L4.8 3.6 Z" fill="#1f2a24" stroke="#1f2a24" stroke-width="0.5" stroke-linejoin="round"/><path d="M8.7 7 V10.6" stroke="#1f2a24" stroke-width="1.3" stroke-linecap="round"/><path d="M10.8 4.6 L12.2 6.2 H14.6" stroke="#1f2a24" stroke-width="1" stroke-linecap="round" stroke-linejoin="round" fill="none"/></svg>
<span class="t" id="t0" style="left:277.30px;top:100px;font-size:11.3px;line-height:12px;height:12px;color:#1f2023;z-index:2;font-weight:700;transform:translate(0,0.20px) scaleX(0.9225);transform-origin:0 50%;">How We Can All Positively</span>
<span class="t" id="t1" style="left:277.30px;top:113px;font-size:11.3px;line-height:12px;height:12px;color:#1f2023;z-index:2;font-weight:700;transform:translate(0,-0.20px) scaleX(0.9309);transform-origin:0 50%;">Impact the Environment:</span>
<span class="t" id="t2" style="left:421.10px;top:102px;font-size:5.5px;line-height:6px;height:6px;color:#4a4a4a;z-index:2;-webkit-text-stroke:0.12px #4a4a4a;transform:translate(0,0.20px);transform-origin:0 50%;">By implementing these sustainability initiatives, we can</span>
<span class="t" id="t3" style="left:421.10px;top:109px;font-size:5.5px;line-height:6px;height:6px;color:#4a4a4a;z-index:2;-webkit-text-stroke:0.12px #4a4a4a;transform:translate(0,0.30px);transform-origin:0 50%;">reduce our environmental footprint and</span>
<span class="t" id="t4" style="left:421.10px;top:117px;font-size:5.5px;line-height:6px;height:6px;color:#4a4a4a;z-index:2;-webkit-text-stroke:0.12px #4a4a4a;transform:translate(0,0.20px);transform-origin:0 50%;">empower the community</span>
<span class="t" id="t5" style="left:319.80px;top:167px;font-size:7.9px;line-height:9px;height:9px;color:#ffffff;z-index:2;font-weight:700;transform:translate(0,0.30px) scaleX(0.8285);transform-origin:0 50%;">Promote Energy</span>
<span class="t" id="t6" style="left:319.80px;top:175px;font-size:7.9px;line-height:9px;height:9px;color:#ffffff;z-index:2;font-weight:700;transform:translate(0,0.40px) scaleX(0.8181);transform-origin:0 50%;">Efficiency</span>
<span class="t" id="t7" style="left:300.00px;top:189px;font-size:5.1px;line-height:6px;height:6px;color:#e3ede7;z-index:2;-webkit-text-stroke:0.04px #e3ede7;transform:translate(0,-0.40px) scaleX(1.0780);transform-origin:0 50%;">Educate students about energy</span>
<span class="t" id="t8" style="left:300.00px;top:196px;font-size:5.1px;line-height:6px;height:6px;color:#e3ede7;z-index:2;-webkit-text-stroke:0.04px #e3ede7;transform:translate(0,-0.40px) scaleX(1.0780);transform-origin:0 50%;">conservation practices and involve</span>
<span class="t" id="t9" style="left:300.00px;top:203px;font-size:5.1px;line-height:6px;height:6px;color:#e3ede7;z-index:2;-webkit-text-stroke:0.04px #e3ede7;transform:translate(0,-0.40px) scaleX(1.0780);transform-origin:0 50%;">them in energy-saving initiatives. (ie:</span>
<span class="t" id="t10" style="left:300.00px;top:210px;font-size:5.1px;line-height:6px;height:6px;color:#e3ede7;z-index:2;-webkit-text-stroke:0.04px #e3ede7;transform:translate(0,-0.40px) scaleX(1.0780);transform-origin:0 50%;">lighting, optimizing heating and</span>
<span class="t" id="t11" style="left:300.00px;top:217px;font-size:5.1px;line-height:6px;height:6px;color:#e3ede7;z-index:2;-webkit-text-stroke:0.04px #e3ede7;transform:translate(0,-0.40px) scaleX(1.0780);transform-origin:0 50%;">cooling systems, and solar panels).</span>
<span class="t" id="t12" style="left:310.50px;top:253px;font-size:7.9px;line-height:9px;height:9px;color:#1d2a22;z-index:2;font-weight:700;transform:translate(0,0.00px) scaleX(0.8294);transform-origin:0 50%;">Reduce Waste</span>
<span class="t" id="t13" style="left:292.00px;top:270px;font-size:5.1px;line-height:6px;height:6px;color:#1c3526;z-index:2;-webkit-text-stroke:0.12px #1c3526;transform:translate(0,0.40px) scaleX(1.0780);transform-origin:0 50%;">Implement waste reduction strategies</span>
<span class="t" id="t14" style="left:292.00px;top:277px;font-size:5.1px;line-height:6px;height:6px;color:#1c3526;z-index:2;-webkit-text-stroke:0.12px #1c3526;transform:translate(0,0.40px) scaleX(1.0780);transform-origin:0 50%;">like recycling, composting, and reducing</span>
<span class="t" id="t15" style="left:292.00px;top:284px;font-size:5.1px;line-height:6px;height:6px;color:#1c3526;z-index:2;-webkit-text-stroke:0.12px #1c3526;transform:translate(0,0.30px) scaleX(1.0780);transform-origin:0 50%;">single-use plastics. Encourage reusable</span>
<span class="t" id="t16" style="left:292.00px;top:291px;font-size:5.1px;line-height:6px;height:6px;color:#1c3526;z-index:2;-webkit-text-stroke:0.12px #1c3526;transform:translate(0,0.10px) scaleX(1.0780);transform-origin:0 50%;">containers for lunches and drinks.</span>
<span class="t" id="t17" style="left:292.00px;top:298px;font-size:5.1px;line-height:6px;height:6px;color:#1c3526;z-index:2;-webkit-text-stroke:0.12px #1c3526;transform:translate(0,0.00px) scaleX(1.0780);transform-origin:0 50%;">Conduct waste audits to raise awareness.</span>
<span class="t" id="t18" style="left:305.20px;top:331px;font-size:7.9px;line-height:9px;height:9px;color:#ffffff;z-index:2;font-weight:700;transform:translate(0,-0.40px) scaleX(0.8284);transform-origin:0 50%;">Community Engagement</span>
<span class="t" id="t19" style="left:305.20px;top:339px;font-size:7.9px;line-height:9px;height:9px;color:#ffffff;z-index:2;font-weight:700;transform:translate(0,0.00px) scaleX(0.8221);transform-origin:0 50%;">and Partnerships</span>
<span class="t" id="t20" style="left:286.40px;top:353px;font-size:5.1px;line-height:6px;height:6px;color:#e3ede7;z-index:2;-webkit-text-stroke:0.04px #e3ede7;transform:translate(0,0.00px) scaleX(1.0780);transform-origin:0 50%;">Engage with the local community and</span>
<span class="t" id="t21" style="left:286.40px;top:360px;font-size:5.1px;line-height:6px;height:6px;color:#e3ede7;z-index:2;-webkit-text-stroke:0.04px #e3ede7;transform:translate(0,0.20px) scaleX(1.0780);transform-origin:0 50%;">environmental organizations to collaborate</span>
<span class="t" id="t22" style="left:286.40px;top:367px;font-size:5.1px;line-height:6px;height:6px;color:#e3ede7;z-index:2;-webkit-text-stroke:0.04px #e3ede7;transform:translate(0,0.20px) scaleX(1.0780);transform-origin:0 50%;">on environmental projects and initiatives.</span>
<span class="t" id="t23" style="left:286.40px;top:374px;font-size:5.1px;line-height:6px;height:6px;color:#e3ede7;z-index:2;-webkit-text-stroke:0.04px #e3ede7;transform:translate(0,0.10px) scaleX(1.0780);transform-origin:0 50%;">Participate in community clean-up events,</span>
<span class="t" id="t24" style="left:286.40px;top:381px;font-size:5.1px;line-height:6px;height:6px;color:#e3ede7;z-index:2;-webkit-text-stroke:0.04px #e3ede7;transform:translate(0,0.00px) scaleX(1.0780);transform-origin:0 50%;">tree planting campaigns, or waterway</span>
<span class="t" id="t25" style="left:286.40px;top:388px;font-size:5.1px;line-height:6px;height:6px;color:#e3ede7;z-index:2;-webkit-text-stroke:0.04px #e3ede7;transform:translate(0,0.00px) scaleX(1.0780);transform-origin:0 50%;">restoration projects. Foster partnerships</span>
<span class="t" id="t26" style="left:286.40px;top:395px;font-size:5.1px;line-height:6px;height:6px;color:#e3ede7;z-index:2;-webkit-text-stroke:0.04px #e3ede7;transform:translate(0,-0.10px) scaleX(1.0780);transform-origin:0 50%;">for students to actively contribute to</span>
<span class="t" id="t27" style="left:286.40px;top:402px;font-size:5.1px;line-height:6px;height:6px;color:#e3ede7;z-index:2;-webkit-text-stroke:0.04px #e3ede7;transform:translate(0,-0.20px) scaleX(1.0780);transform-origin:0 50%;">environmental conservation.</span>
<span class="t" id="t28" style="left:440.00px;top:159px;font-size:7.9px;line-height:9px;height:9px;color:#1d2a22;z-index:2;font-weight:700;transform:translate(0,-0.30px) scaleX(0.8210);transform-origin:0 50%;">Environmental</span>
<span class="t" id="t29" style="left:440.00px;top:167px;font-size:7.9px;line-height:9px;height:9px;color:#1d2a22;z-index:2;font-weight:700;transform:translate(0,-0.20px) scaleX(0.8164);transform-origin:0 50%;">Education Programs</span>
<span class="t" id="t30" style="left:421.10px;top:181px;font-size:5.1px;line-height:6px;height:6px;color:#1c3526;z-index:2;-webkit-text-stroke:0.12px #1c3526;transform:translate(0,0.00px) scaleX(1.0780);transform-origin:0 50%;">Teach students about sustainability,</span>
<span class="t" id="t31" style="left:421.10px;top:188px;font-size:5.1px;line-height:6px;height:6px;color:#1c3526;z-index:2;-webkit-text-stroke:0.12px #1c3526;transform:translate(0,-0.20px) scaleX(1.0780);transform-origin:0 50%;">environmental issues, and</span>
<span class="t" id="t32" style="left:421.10px;top:195px;font-size:5.1px;line-height:6px;height:6px;color:#1c3526;z-index:2;-webkit-text-stroke:0.12px #1c3526;transform:translate(0,-0.30px) scaleX(1.0780);transform-origin:0 50%;">conservation.  Foster a sense of</span>
<span class="t" id="t33" style="left:421.10px;top:202px;font-size:5.1px;line-height:6px;height:6px;color:#1c3526;z-index:2;-webkit-text-stroke:0.12px #1c3526;transform:translate(0,-0.40px) scaleX(1.0780);transform-origin:0 50%;">environmental stewardship from an</span>
<span class="t" id="t34" style="left:421.10px;top:209px;font-size:5.1px;line-height:6px;height:6px;color:#1c3526;z-index:2;-webkit-text-stroke:0.12px #1c3526;transform:translate(0,-0.50px) scaleX(1.0780);transform-origin:0 50%;">early age.</span>
<span class="t" id="t35" style="left:439.80px;top:241px;font-size:7.9px;line-height:9px;height:9px;color:#ffffff;z-index:2;font-weight:700;transform:translate(0,0.50px) scaleX(0.8061);transform-origin:0 50%;">Create Green Spaces</span>
<span class="t" id="t36" style="left:422.00px;top:261px;font-size:5.1px;line-height:6px;height:6px;color:#e3ede7;z-index:2;-webkit-text-stroke:0.04px #e3ede7;transform:translate(0,0.00px) scaleX(1.0780);transform-origin:0 50%;">Create school gardens with native plants</span>
<span class="t" id="t37" style="left:422.00px;top:268px;font-size:5.1px;line-height:6px;height:6px;color:#e3ede7;z-index:2;-webkit-text-stroke:0.04px #e3ede7;transform:translate(0,-0.10px) scaleX(1.0780);transform-origin:0 50%;">to teach students about agriculture,</span>
<span class="t" id="t38" style="left:422.00px;top:275px;font-size:5.1px;line-height:6px;height:6px;color:#e3ede7;z-index:2;-webkit-text-stroke:0.04px #e3ede7;transform:translate(0,-0.30px) scaleX(1.0780);transform-origin:0 50%;">biodiversity, and ecosystems. Use the</span>
<span class="t" id="t39" style="left:422.00px;top:282px;font-size:5.1px;line-height:6px;height:6px;color:#e3ede7;z-index:2;-webkit-text-stroke:0.04px #e3ede7;transform:translate(0,-0.40px) scaleX(1.0780);transform-origin:0 50%;">outdoor areas as living laboratories for</span>
<span class="t" id="t40" style="left:422.00px;top:288px;font-size:5.1px;line-height:6px;height:6px;color:#e3ede7;z-index:2;-webkit-text-stroke:0.04px #e3ede7;transform:translate(0,0.40px) scaleX(1.0780);transform-origin:0 50%;">hands-on environmental education.</span>
<span class="t" id="t41" style="left:442.00px;top:322px;font-size:7.9px;line-height:9px;height:9px;color:#1d2a22;z-index:2;font-weight:700;transform:translate(0,0.20px) scaleX(0.8136);transform-origin:0 50%;">Encourage Sustainable</span>
<span class="t" id="t42" style="left:442.00px;top:330px;font-size:7.9px;line-height:9px;height:9px;color:#1d2a22;z-index:2;font-weight:700;transform:translate(0,0.30px) scaleX(0.8416);transform-origin:0 50%;">Transportation</span>
<span class="t" id="t43" style="left:421.90px;top:345px;font-size:5.1px;line-height:6px;height:6px;color:#1c3526;z-index:2;-webkit-text-stroke:0.12px #1c3526;transform:translate(0,0.00px) scaleX(1.0780);transform-origin:0 50%;">Promote alternative modes of</span>
<span class="t" id="t44" style="left:421.90px;top:352px;font-size:5.1px;line-height:6px;height:6px;color:#1c3526;z-index:2;-webkit-text-stroke:0.12px #1c3526;transform:translate(0,-0.10px) scaleX(1.0780);transform-origin:0 50%;">transportation such as walking, biking, or</span>
<span class="t" id="t45" style="left:421.90px;top:359px;font-size:5.1px;line-height:6px;height:6px;color:#1c3526;z-index:2;-webkit-text-stroke:0.12px #1c3526;transform:translate(0,-0.20px) scaleX(1.0780);transform-origin:0 50%;">carpooling to reduce carbon emissions</span>
<span class="t" id="t46" style="left:421.90px;top:366px;font-size:5.1px;line-height:6px;height:6px;color:#1c3526;z-index:2;-webkit-text-stroke:0.12px #1c3526;transform:translate(0,-0.30px) scaleX(1.0780);transform-origin:0 50%;">from commuting. Provide bike racks,</span>
<span class="t" id="t47" style="left:421.90px;top:373px;font-size:5.1px;line-height:6px;height:6px;color:#1c3526;z-index:2;-webkit-text-stroke:0.12px #1c3526;transform:translate(0,-0.40px) scaleX(1.0780);transform-origin:0 50%;">pedestrian paths, and designated carpool</span>
<span class="t" id="t48" style="left:421.90px;top:379px;font-size:5.1px;line-height:6px;height:6px;color:#1c3526;z-index:2;-webkit-text-stroke:0.12px #1c3526;transform:translate(0,0.50px) scaleX(1.0780);transform-origin:0 50%;">areas to support sustainable transportation</span>
<span class="t" id="t49" style="left:421.90px;top:386px;font-size:5.1px;line-height:6px;height:6px;color:#1c3526;z-index:2;-webkit-text-stroke:0.12px #1c3526;transform:translate(0,0.40px) scaleX(1.0780);transform-origin:0 50%;">options. Organize events like Walk or Bike</span>
<span class="t" id="t50" style="left:421.90px;top:393px;font-size:5.1px;line-height:6px;height:6px;color:#1c3526;z-index:2;-webkit-text-stroke:0.12px #1c3526;transform:translate(0,0.30px) scaleX(1.0780);transform-origin:0 50%;">to School Day.</span>
<span class="t" id="t51" style="left:296.90px;top:443px;font-size:5.8px;line-height:6px;height:6px;color:#ffffff;z-index:2;font-weight:700;transform:translate(0,0.30px) scaleX(0.8346);transform-origin:0 50%;">CITY OF</span>
<span class="t" id="t52" style="left:317.60px;top:443px;font-size:5.8px;line-height:6px;height:6px;color:#5bbf8b;z-index:2;font-weight:700;transform:translate(0,0.30px) scaleX(0.8428);transform-origin:0 50%;">OAKWOOD</span>
<span class="t" id="t53" style="left:364.60px;top:443px;font-size:5.6px;line-height:6px;height:6px;color:#ffffff;z-index:2;transform:translate(0,0.40px) scaleX(0.9882);transform-origin:0 50%;">For more sustainability initiatives, visit us at</span>
<span class="t" id="t54" style="left:472.30px;top:443px;font-size:5.6px;line-height:6px;height:6px;color:#5bbf8b;z-index:2;font-weight:700;transform:translate(0,0.40px) scaleX(0.9561);transform-origin:0 50%;">www.cityofoakwood.com</span>
<span class="t" id="t55" style="left:14.30px;top:15px;font-size:9px;line-height:10px;height:10px;color:#2a2d33;z-index:7;font-weight:700;transform:translate(0,0.40px) scaleX(0.9714);transform-origin:0 50%;">Home</span>
<span class="t" id="t56" style="left:54.00px;top:15px;font-size:9px;line-height:10px;height:10px;color:#2a2d33;z-index:7;font-weight:700;transform:translate(0,0.40px) scaleX(1.0032);transform-origin:0 50%;">Templates</span>
<span class="t" id="t57" style="left:126.80px;top:15px;font-size:9px;line-height:10px;height:10px;color:#2a2d33;z-index:7;font-weight:700;transform:translate(0,0.40px) scaleX(0.9152);transform-origin:0 50%;">File</span>
<span class="t" id="t58" style="left:171.40px;top:15px;font-size:9.2px;line-height:10px;height:10px;color:#45484e;z-index:8;transform:translate(0,0.20px) scaleX(0.9792);transform-origin:0 50%;">Green Positively Impacts Nature E...</span>
<span class="t" id="t59" style="left:629.50px;top:15px;font-size:9px;line-height:10px;height:10px;color:#fff;z-index:8;font-weight:700;transform:translate(-50%,0.40px);transform-origin:50% 50%;">Share</span>
<span class="t" id="t60" style="left:679.30px;top:15px;font-size:9px;line-height:10px;height:10px;color:#176fe6;z-index:8;font-weight:700;transform:translate(-50%,0.40px);transform-origin:50% 50%;">Invite</span>
<span class="t" id="t61" style="left:718.50px;top:15px;font-size:8.6px;line-height:10px;height:10px;color:#1d1f23;z-index:8;-webkit-text-stroke:0.3px #1d1f23;transform:translate(-50%,0.30px);transform-origin:50% 50%;">?</span>
<span class="t" id="t62" style="left:745.80px;top:15px;font-size:8.6px;line-height:10px;height:10px;color:#fff;z-index:8;transform:translate(-50%,0.30px) scaleX(0.9035);transform-origin:50% 50%;">SC</span>
<span class="t" id="t63" style="left:66.10px;top:48px;font-size:8.6px;line-height:10px;height:10px;color:#2a2d33;z-index:7;-webkit-text-stroke:0.25px #2a2d33;transform:translate(-50%,0.10px);transform-origin:50% 50%;">A</span>
<span class="t" id="t64" style="left:86.80px;top:49px;font-size:9px;line-height:10px;height:10px;color:#55585e;z-index:8;transform:translate(0,0.30px) scaleX(1.0095);transform-origin:0 50%;">Titillium Web</span>
<span class="t" id="t65" style="left:204.30px;top:49px;font-size:8.8px;line-height:10px;height:10px;color:#3a3d42;z-index:8;transform:translate(-50%,0.40px);transform-origin:50% 50%;">32</span>
<span class="t" id="t66" style="left:378.10px;top:49px;font-size:6.5px;line-height:7px;height:7px;color:#25282d;z-index:7;font-weight:700;transform:translate(-50%,-0.10px) scaleX(0.8839);transform-origin:50% 50%;">AB</span>
<span class="t" id="t67" style="left:515.70px;top:49px;font-size:8.8px;line-height:10px;height:10px;color:#3a3d42;z-index:7;font-weight:700;transform:translate(0,0.30px) scaleX(1.0326);transform-origin:0 50%;">Effects</span>
<span class="t" id="t68" style="left:21.70px;top:85px;font-size:7.8px;line-height:9px;height:9px;color:#2f6fbf;z-index:7;-webkit-text-stroke:0.18px #2f6fbf;transform:translate(-50%,0.50px) scaleX(0.9726);transform-origin:50% 50%;">Brand Kit</span>
<span class="t" id="t69" style="left:21.70px;top:129px;font-size:7.8px;line-height:9px;height:9px;color:#202328;z-index:7;-webkit-text-stroke:0.18px #202328;transform:translate(-50%,-0.10px) scaleX(0.9987);transform-origin:50% 50%;">Templates</span>
<span class="t" id="t70" style="left:21.70px;top:172px;font-size:7.8px;line-height:9px;height:9px;color:#202328;z-index:7;-webkit-text-stroke:0.18px #202328;transform:translate(-50%,0.20px) scaleX(0.9688);transform-origin:50% 50%;">Elements</span>
<span class="t" id="t71" style="left:21.70px;top:215px;font-size:7.8px;line-height:9px;height:9px;color:#202328;z-index:7;-webkit-text-stroke:0.18px #202328;transform:translate(-50%,0.50px) scaleX(1.0131);transform-origin:50% 50%;">Text</span>
<span class="t" id="t72" style="left:21.70px;top:259px;font-size:7.8px;line-height:9px;height:9px;color:#202328;z-index:7;-webkit-text-stroke:0.18px #202328;transform:translate(-50%,-0.40px) scaleX(0.9612);transform-origin:50% 50%;">Shapes &amp;</span>
<span class="t" id="t73" style="left:21.70px;top:268px;font-size:7.8px;line-height:9px;height:9px;color:#202328;z-index:7;-webkit-text-stroke:0.18px #202328;transform:translate(-50%,-0.40px) scaleX(0.9656);transform-origin:50% 50%;">Lines</span>
<span class="t" id="t74" style="left:21.70px;top:311px;font-size:7.8px;line-height:9px;height:9px;color:#202328;z-index:7;-webkit-text-stroke:0.18px #202328;transform:translate(-50%,-0.20px) scaleX(0.9925);transform-origin:50% 50%;">Icons</span>
<span class="t" id="t75" style="left:21.70px;top:354px;font-size:7.8px;line-height:9px;height:9px;color:#202328;z-index:7;-webkit-text-stroke:0.18px #202328;transform:translate(-50%,0.20px) scaleX(0.9969);transform-origin:50% 50%;">Images</span>
<span class="t" id="t76" style="left:21.70px;top:397px;font-size:7.8px;line-height:9px;height:9px;color:#202328;z-index:7;-webkit-text-stroke:0.18px #202328;transform:translate(-50%,0.50px) scaleX(1.0014);transform-origin:50% 50%;">Charts</span>
<span class="t" id="t77" style="left:21.70px;top:441px;font-size:7.8px;line-height:9px;height:9px;color:#202328;z-index:7;-webkit-text-stroke:0.18px #202328;transform:translate(-50%,-0.20px) scaleX(0.9697);transform-origin:50% 50%;">Maps</span>
<span class="t" id="t78" style="left:484.20px;top:76px;font-size:9.6px;line-height:11px;height:11px;color:#1d1f23;z-index:10;font-weight:700;transform:translate(0,0.45px) scaleX(0.9624);transform-origin:0 50%;">Text Tag</span>
<span class="t" id="t79" style="left:488.80px;top:105px;font-size:9px;line-height:10px;height:10px;color:#2260a8;z-index:11;transform:translate(0,0.30px);transform-origin:0 50%;">H1</span>
<span class="t" id="t80" style="left:488.80px;top:125px;font-size:9px;line-height:10px;height:10px;color:#3a3d42;z-index:11;transform:translate(0,0.00px);transform-origin:0 50%;">H2</span>
<span class="t" id="t81" style="left:488.80px;top:145px;font-size:9px;line-height:10px;height:10px;color:#3a3d42;z-index:11;transform:translate(0,-0.30px);transform-origin:0 50%;">H3</span>
<span class="t" id="t82" style="left:488.80px;top:164px;font-size:9px;line-height:10px;height:10px;color:#3a3d42;z-index:11;transform:translate(0,0.40px);transform-origin:0 50%;">H4</span>
<span class="t" id="t83" style="left:488.80px;top:184px;font-size:9px;line-height:10px;height:10px;color:#3a3d42;z-index:11;transform:translate(0,0.20px);transform-origin:0 50%;">H5</span>
<span class="t" id="t84" style="left:488.80px;top:204px;font-size:9px;line-height:10px;height:10px;color:#3a3d42;z-index:11;transform:translate(0,-0.10px);transform-origin:0 50%;">H6</span>
<span class="t" id="t85" style="left:488.80px;top:224px;font-size:9px;line-height:10px;height:10px;color:#3a3d42;z-index:11;transform:translate(0,-0.40px);transform-origin:0 50%;">P</span>
<span class="t" id="t86" style="left:756.90px;top:175px;font-size:8.6px;line-height:10px;height:10px;color:#25282d;z-index:8;font-weight:700;transform:translate(-50%,0.20px);transform-origin:50% 50%;">1</span>
<span class="t" id="t87" style="left:757.00px;top:190px;font-size:7.9px;line-height:9px;height:9px;color:#34373d;z-index:8;transform:translate(-50%,0.10px) scaleX(1.0173);transform-origin:50% 50%;">of 1</span>
<span class="t" id="t88" style="left:657.40px;top:450px;font-size:8.8px;line-height:10px;height:10px;color:#3a3d42;z-index:6;transform:translate(-50%,0.40px) scaleX(0.9995);transform-origin:50% 50%;">58%</span>
<span class="t" id="t89" style="left:728.20px;top:407px;font-size:8.9px;line-height:10px;height:10px;color:#1d1f23;z-index:6;-webkit-text-stroke:0.3px #1d1f23;transform:translate(-50%,0.00px) scaleX(0.9822);transform-origin:50% 50%;">Need help?</span>
<span class="t" id="t90" style="left:274.70px;top:456px;font-size:9px;line-height:10px;height:10px;color:#1d1f23;z-index:6;-webkit-text-stroke:0.2px #1d1f23;transform:translate(-50%,0.00px) scaleX(0.9993);transform-origin:50% 50%;">Notes</span>

</div>
</body></html>
